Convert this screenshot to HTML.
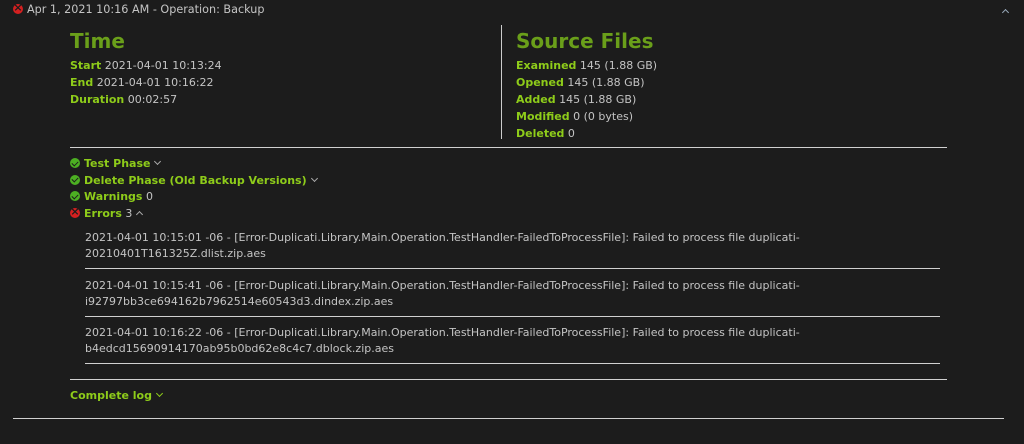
<!DOCTYPE html>
<html><head><style>
body{margin:0;background:#1c1c1c;width:1024px;height:444px;overflow:hidden;font-family:"DejaVu Sans","Liberation Sans",sans-serif;color:#c4c4c4;font-size:11px;position:relative}
.a{position:absolute;white-space:nowrap}
.g{color:#8ecc1a;font-weight:bold}
.t{color:#6a9f1a;font-weight:bold;font-size:20px}
.hr{position:absolute;height:1px;background:#d0d0d0}
.ic{display:inline-block;width:10px;height:10px;border-radius:50%;vertical-align:-1px;margin-right:4px;position:relative}
.ok{background:#4caf22}.er{background:#d42020}
.ok::after{content:"";position:absolute;left:2.5px;top:1.5px;width:3px;height:5px;border:solid #1c1c1c;border-width:0 1.5px 1.5px 0;transform:rotate(45deg)}
.er::after{content:"×";position:absolute;left:0;top:-3px;width:10px;text-align:center;color:#1c1c1c;font-size:11px;font-weight:bold;line-height:14px}
.dn,.up{display:inline-block;width:4px;height:4px;border:solid #aaa;border-width:0 1px 1px 0;margin-left:5px}
.dn{transform:rotate(45deg);vertical-align:3px}
.up{transform:rotate(-135deg);vertical-align:0px}
.row{height:16.7px;line-height:16.7px}
.e{line-height:16px;font-size:11px}
</style></head><body>
<div class="a" style="left:13px;top:3px;font-size:11.2px"><span class="ic er"></span>Apr 1, 2021 10:16 AM - Operation: Backup</div>
<div class="a" style="left:998px;top:5px;"><span class="up" style="border-color:#9ab"></span></div>
<div class="a t" style="left:70px;top:29px">Time</div>
<div class="a" style="left:70px;top:57px;line-height:17px"><span class="g">Start</span> 2021-04-01 10:13:24<br><span class="g">End</span> 2021-04-01 10:16:22<br><span class="g">Duration</span> 00:02:57</div>
<div class="a" style="left:501px;top:25px;width:1px;height:114px;background:#ccc"></div>
<div class="a t" style="left:516px;top:29px">Source Files</div>
<div class="a" style="left:516px;top:57px;line-height:17px"><span class="g">Examined</span> 145 (1.88 GB)<br><span class="g">Opened</span> 145 (1.88 GB)<br><span class="g">Added</span> 145 (1.88 GB)<br><span class="g">Modified</span> 0 (0 bytes)<br><span class="g">Deleted</span> 0</div>
<div class="hr" style="left:70px;top:147px;width:877px"></div>
<div class="a" style="left:70px;top:156px">
<div class="row"><span class="ic ok"></span><span class="g">Test Phase</span><span class="dn"></span></div>
<div class="row"><span class="ic ok"></span><span class="g">Delete Phase (Old Backup Versions)</span><span class="dn"></span></div>
<div class="row"><span class="ic ok"></span><span class="g">Warnings</span> 0</div>
<div class="row"><span class="ic er"></span><span class="g">Errors</span> 3<span class="up"></span></div>
</div>
<div class="a e" style="left:85px;top:230px">2021-04-01 10:15:01 -06 - [Error-Duplicati.Library.Main.Operation.TestHandler-FailedToProcessFile]: Failed to process file duplicati-<br>20210401T161325Z.dlist.zip.aes</div>
<div class="hr" style="left:85px;top:268px;width:855px"></div>
<div class="a e" style="left:85px;top:278px">2021-04-01 10:15:41 -06 - [Error-Duplicati.Library.Main.Operation.TestHandler-FailedToProcessFile]: Failed to process file duplicati-<br>i92797bb3ce694162b7962514e60543d3.dindex.zip.aes</div>
<div class="hr" style="left:85px;top:316px;width:855px"></div>
<div class="a e" style="left:85px;top:325px">2021-04-01 10:16:22 -06 - [Error-Duplicati.Library.Main.Operation.TestHandler-FailedToProcessFile]: Failed to process file duplicati-<br>b4edcd15690914170ab95b0bd62e8c4c7.dblock.zip.aes</div>
<div class="hr" style="left:85px;top:363px;width:855px"></div>
<div class="hr" style="left:70px;top:379px;width:877px"></div>
<div class="a" style="left:70px;top:389px"><span class="g">Complete log</span><span class="dn" style="border-color:#8ecc1a"></span></div>
<div class="hr" style="left:13px;top:418px;width:991px"></div>
</body></html>
